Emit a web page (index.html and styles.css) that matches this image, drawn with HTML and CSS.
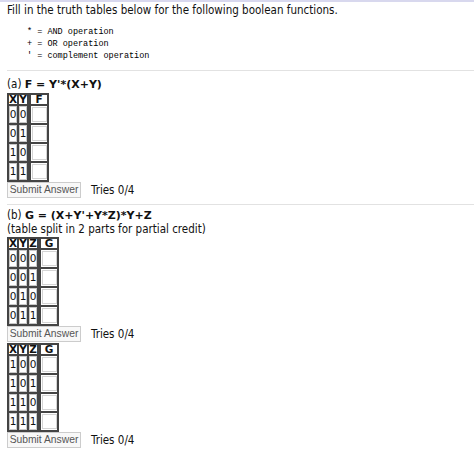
FILE: index.html
```html
<!DOCTYPE html>
<html>
<head>
<meta charset="utf-8">
<link rel="stylesheet" href="styles.css">
</head>
<body>
<div class="topline"></div>
<div class="page">
  <p class="intro">Fill in the truth tables below for the following boolean functions.</p>
  <pre class="ops">* = AND operation
+ = OR operation
' = complement operation</pre>
  <hr class="rule">
  <div class="part">
    <div class="title">(a) <b>F = Y'*(X+Y)</b></div>
    <table class="tt">
      <tr class="hd"><td>X</td><td>Y</td><td class="sep"></td><td class="out">F</td></tr>
      <tr><td>0</td><td>0</td><td class="sep"></td><td class="out"><span class="box"></span></td></tr>
      <tr><td>0</td><td>1</td><td class="sep"></td><td class="out"><span class="box"></span></td></tr>
      <tr><td>1</td><td>0</td><td class="sep"></td><td class="out"><span class="box"></span></td></tr>
      <tr><td>1</td><td>1</td><td class="sep"></td><td class="out"><span class="box"></span></td></tr>
    </table>
    <div class="submit"><span class="btn">Submit Answer</span><span class="tries">Tries 0/4</span></div>
  </div>
  <hr class="rule rule-b">
  <div class="part">
    <div class="title title-b">(b) <b>G = (X+Y'+Y*Z)*Y+Z</b></div>
    <div class="sub">(table split in 2 parts for partial credit)</div>
    <table class="tt">
      <tr class="hd"><td>X</td><td>Y</td><td>Z</td><td class="sep"></td><td class="out">G</td></tr>
      <tr><td>0</td><td>0</td><td>0</td><td class="sep"></td><td class="out"><span class="box"></span></td></tr>
      <tr><td>0</td><td>0</td><td>1</td><td class="sep"></td><td class="out"><span class="box"></span></td></tr>
      <tr><td>0</td><td>1</td><td>0</td><td class="sep"></td><td class="out"><span class="box"></span></td></tr>
      <tr><td>0</td><td>1</td><td>1</td><td class="sep"></td><td class="out"><span class="box"></span></td></tr>
    </table>
    <div class="submit"><span class="btn">Submit Answer</span><span class="tries">Tries 0/4</span></div>
    <table class="tt">
      <tr class="hd"><td>X</td><td>Y</td><td>Z</td><td class="sep"></td><td class="out">G</td></tr>
      <tr><td>1</td><td>0</td><td>0</td><td class="sep"></td><td class="out"><span class="box"></span></td></tr>
      <tr><td>1</td><td>0</td><td>1</td><td class="sep"></td><td class="out"><span class="box"></span></td></tr>
      <tr><td>1</td><td>1</td><td>0</td><td class="sep"></td><td class="out"><span class="box"></span></td></tr>
      <tr><td>1</td><td>1</td><td>1</td><td class="sep"></td><td class="out"><span class="box"></span></td></tr>
    </table>
    <div class="submit"><span class="btn">Submit Answer</span><span class="tries">Tries 0/4</span></div>
  </div>
</div>
</body>
</html>
```

FILE: styles.css
```css
html, body {
  margin: 0;
  padding: 0;
  background: #fff;
}
body {
  font-family: "DejaVu Sans Condensed", "DejaVu Sans", Verdana, sans-serif;
  color: #111;
  font-size: 11.5px;
}
.topline {
  height: 2px;
  background: #d8d8ee;
}
.page {
  padding: 0 0 0 7px;
}
.intro {
  margin: 1px 0 0 0;
  line-height: 14px;
}
.ops {
  margin: 9px 0 0 20px;
  font-family: "Liberation Mono", "Courier New", monospace;
  font-size: 8.5px;
  line-height: 12px;
  color: #000;
}
.rule {
  margin: 8px 0 0 0;
  border: 0;
  border-top: 1px solid #e2e2e2;
  height: 0;
}
.part {
  padding-top: 6px;
}
.title {
  line-height: 14px;
}
.title b {
  font-family: "DejaVu Sans", Verdana, sans-serif;
  font-size: 11px;
  font-weight: bold;
}
.title-b {
  line-height: 13px;
}
.rule-b {
  margin-top: 6px;
}
.part + .rule-b + .part {
  padding-top: 4px;
}
.sub {
  line-height: 14px;
}
.tt {
  border-collapse: collapse;
  border: 2px solid #444;
  margin-top: 1px;
}
.tt td {
  border: 2px solid #444;
  padding: 0;
  width: 8px;
  text-align: center;
  font-family: "DejaVu Sans", Verdana, sans-serif;
  font-size: 10.5px;
  height: 17px;
  line-height: 15px;
  background: #fff;
  box-shadow: inset 0 0 0 1px #c8c8c8;
}
.tt tr.hd td {
  font-weight: bold;
  height: 9px;
  line-height: 9px;
  box-shadow: none;
}
.tt td.sep {
  width: 0;
  border-left-width: 1px;
  border-right-width: 1px;
  box-shadow: none;
}
.tt td.out {
  width: 16px;
  box-shadow: none;
}
.box {
  display: block;
  width: 15px;
  height: 15px;
  margin: 1px auto;
  border: 1px solid #d4d4d4;
  box-sizing: border-box;
}
.submit {
  display: flex;
  align-items: center;
  gap: 10px;
  margin-top: 0;
}
.btn {
  display: inline-block;
  box-sizing: border-box;
  width: 74px;
  height: 16px;
  text-align: center;
  font-family: "Liberation Sans", Arial, sans-serif;
  font-size: 10.3px;
  color: #555;
  border: 1px solid #ccc;
  background: #f8f8f8;
  line-height: 14px;
}
.tries {
  font-size: 11.5px;
}
```
